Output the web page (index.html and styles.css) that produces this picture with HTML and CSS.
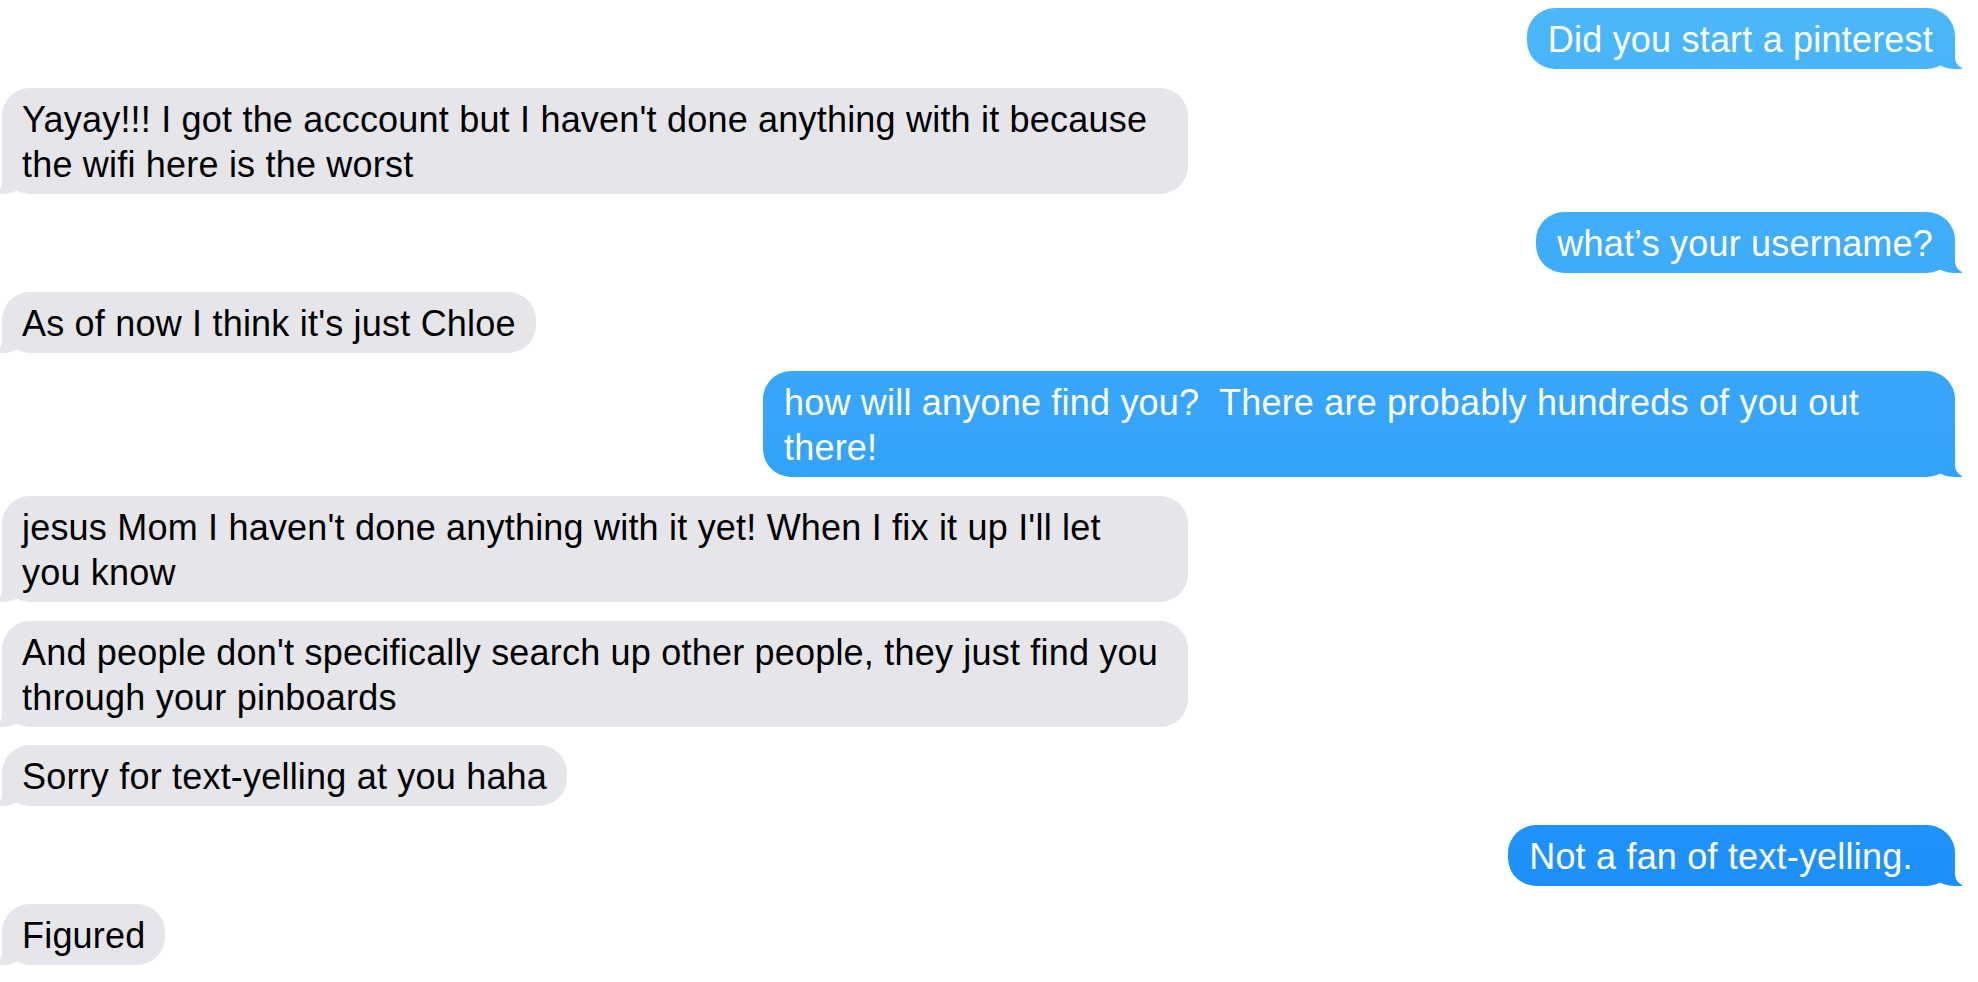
FILE: index.html
```html
<!DOCTYPE html>
<html lang="en">
<head>
<meta charset="utf-8">
<title>Messages</title>
<link rel="stylesheet" href="styles.css">
</head>
<body>
<main class="thread">
  <div class="msg me">Did you start a pinterest</div>
  <div class="msg them">Yayay!!! I got the acccount but I haven't done anything with it because the wifi here is the worst</div>
  <div class="msg me">what’s your username?</div>
  <div class="msg them">As of now I think it's just Chloe</div>
  <div class="msg me">how will anyone find you?&nbsp; There are probably hundreds of you out there!</div>
  <div class="msg them">jesus Mom I haven't done anything with it yet! When I fix it up I'll let you know</div>
  <div class="msg them">And people don't specifically search up other people, they just find you through your pinboards</div>
  <div class="msg them">Sorry for text-yelling at you haha</div>
  <div class="msg me">Not a fan of text-yelling.&nbsp;&nbsp;</div>
  <div class="msg them">Figured</div>
</main>
</body>
</html>
```
FILE: styles.css
```css
html, body {
  margin: 0;
  padding: 0;
  background: #ffffff;
}

body {
  font-family: "Liberation Sans", Arial, sans-serif;
  overflow: hidden;
}

.thread {
  display: flex;
  flex-direction: column;
  gap: 18.6px;
  padding: 8px 0;
}

.msg {
  position: relative;
  z-index: 0;
  box-sizing: border-box;
  max-width: 1186px;
  padding: 9px 20px 7px 20px;
  font-size: 36px;
  line-height: 45px;
  letter-spacing: 0.2px;
  border-radius: 28px;
}

.them {
  align-self: flex-start;
  margin-left: 2px;
  background: #e5e5ea;
  color: #000000;
}

.me {
  align-self: flex-end;
  max-width: 1192px;
  margin-right: 23px;
  padding-left: 21px;
  padding-right: 22px;
  color: #ffffff;
  background: linear-gradient(to bottom, #4cb8fa 0px, #188bfa 982px) fixed;
}

/* tails (painted beneath the bubble text) */
.msg::before,
.msg::after {
  content: "";
  position: absolute;
  z-index: -1;
  bottom: 0;
  height: 30px;
}

.me::before {
  right: -7px;
  width: 34px;
  background: linear-gradient(to bottom, #4cb8fa 0px, #188bfa 982px) fixed;
  border-bottom-left-radius: 26px 22px;
}

.me::after {
  right: -40px;
  width: 40px;
  background: #ffffff;
  border-bottom-left-radius: 12px;
}

.them::before {
  left: -7px;
  width: 34px;
  background: #e5e5ea;
  border-bottom-right-radius: 26px 22px;
}

.them::after {
  left: -40px;
  width: 40px;
  background: #ffffff;
  border-bottom-right-radius: 12px;
}
```
